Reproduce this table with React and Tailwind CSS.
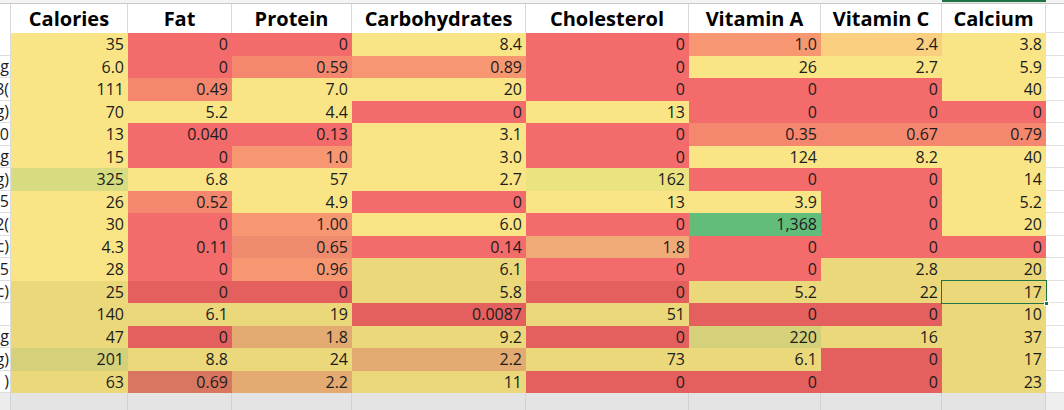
import React from 'react';

const GRID = 'grid grid-cols-[11px_117px_104px_120px_174px_163px_132px_121px_104px_18px]';

const HEADERS = ['Calories', 'Fat', 'Protein', 'Carbohydrates', 'Cholesterol', 'Vitamin A', 'Vitamin C', 'Calcium'];

// colour scale fills, picked off the screenshot
const FILL = {
  Y: 'bg-[#f9e585]',
  y: 'bg-[#ebd87a]',
  R: 'bg-[#f46b6b]',
  r: 'bg-[#e3605f]',
  o: 'bg-[#f4876e]',
  m: 'bg-[#ee8a6e]',
  p: 'bg-[#f79771]',
  n: 'bg-[#fbcf80]',
  a: 'bg-[#efaa77]',
  t: 'bg-[#e3aa72]',
  d: 'bg-[#d8765f]',
  g: 'bg-[#63bd7a]',
  L: 'bg-[#d8dc80]',
  l: 'bg-[#d5d07a]',
  K: 'bg-[#eae380]',
};

const ROWS = [
  { label: '', cells: [['35', 'Y'], ['0', 'R'], ['0', 'R'], ['8.4', 'Y'], ['0', 'R'], ['1.0', 'p'], ['2.4', 'n'], ['3.8', 'Y']] },
  { label: 'g', cells: [['6.0', 'Y'], ['0', 'R'], ['0.59', 'o'], ['0.89', 'p'], ['0', 'R'], ['26', 'Y'], ['2.7', 'Y'], ['5.9', 'Y']] },
  { label: '3(', cells: [['111', 'Y'], ['0.49', 'o'], ['7.0', 'Y'], ['20', 'Y'], ['0', 'R'], ['0', 'R'], ['0', 'R'], ['40', 'Y']] },
  { label: 'g)', cells: [['70', 'Y'], ['5.2', 'Y'], ['4.4', 'Y'], ['0', 'R'], ['13', 'Y'], ['0', 'R'], ['0', 'R'], ['0', 'R']] },
  { label: '0', cells: [['13', 'Y'], ['0.040', 'R'], ['0.13', 'R'], ['3.1', 'Y'], ['0', 'R'], ['0.35', 'o'], ['0.67', 'o'], ['0.79', 'o']] },
  { label: 'g', cells: [['15', 'Y'], ['0', 'R'], ['1.0', 'p'], ['3.0', 'Y'], ['0', 'R'], ['124', 'Y'], ['8.2', 'Y'], ['40', 'Y']] },
  { label: 'g)', cells: [['325', 'L'], ['6.8', 'Y'], ['57', 'Y'], ['2.7', 'Y'], ['162', 'K'], ['0', 'R'], ['0', 'R'], ['14', 'Y']] },
  { label: '5', cells: [['26', 'Y'], ['0.52', 'o'], ['4.9', 'Y'], ['0', 'R'], ['13', 'Y'], ['3.9', 'Y'], ['0', 'R'], ['5.2', 'Y']] },
  { label: '2(', cells: [['30', 'Y'], ['0', 'R'], ['1.00', 'p'], ['6.0', 'Y'], ['0', 'R'], ['1,368', 'g'], ['0', 'R'], ['20', 'Y']] },
  { label: 'c)', cells: [['4.3', 'Y'], ['0.11', 'R'], ['0.65', 'm'], ['0.14', 'R'], ['1.8', 'a'], ['0', 'R'], ['0', 'R'], ['0', 'R']] },
  { label: '5', cells: [['28', 'Y'], ['0', 'R'], ['0.96', 'p'], ['6.1', 'y'], ['0', 'R'], ['0', 'R'], ['2.8', 'y'], ['20', 'y']] },
  { label: 'c)', cells: [['25', 'y'], ['0', 'r'], ['0', 'r'], ['5.8', 'y'], ['0', 'r'], ['5.2', 'y'], ['22', 'y'], ['17', 'y']], selected: 7 },
  { label: '', cells: [['140', 'y'], ['6.1', 'y'], ['19', 'y'], ['0.0087', 'r'], ['51', 'y'], ['0', 'r'], ['0', 'r'], ['10', 'y']] },
  { label: 'g', cells: [['47', 'y'], ['0', 'r'], ['1.8', 't'], ['9.2', 'y'], ['0', 'r'], ['220', 'l'], ['16', 'y'], ['37', 'y']] },
  { label: 'g)', cells: [['201', 'l'], ['8.8', 'y'], ['24', 'y'], ['2.2', 't'], ['73', 'y'], ['6.1', 'y'], ['0', 'r'], ['17', 'y']] },
  { label: ')', cells: [['63', 'y'], ['0.69', 'd'], ['2.2', 't'], ['11', 'y'], ['0', 'r'], ['0', 'r'], ['0', 'r'], ['23', 'y']] },
];

export default function App() {
  return (
    <div className="w-[1064px] h-[410px] overflow-hidden bg-white text-[#1c1c1c] font-['Open_Sans',_'Noto_Sans',sans-serif]">
      {/* Column header strip edge */}
      <div className={`${GRID} h-[4px] bg-[#f3f3f3] border-b border-[#c8c8c8]`}>
        <div />
        <div />
        <div />
        <div />
        <div />
        <div />
        <div />
        <div />
        <div className="bg-[#e9e9e9] border-t-2 border-[#217346]" />
        <div />
      </div>

      {/* Header row */}
      <div className={`${GRID} h-[29px] bg-white`}>
        <div className="border-r border-[#d9d9d9]" />
        {HEADERS.map(h => (
          <div key={h} className="flex items-center justify-center border-r border-[#d9d9d9] text-[20px] font-bold text-black leading-none">
            {h}
          </div>
        ))}
        <div className="border-b border-[#e1e1e1]" />
      </div>

      {/* Data rows */}
      {ROWS.map((row, i) => (
        <div key={i} className={`${GRID} h-[22.5px] relative ${row.selected != null ? 'z-10' : ''}`}>
          <div className="relative overflow-hidden bg-white border-r border-b border-[#dcdcdc]">
            <span className="absolute right-[1px] top-1/2 -translate-y-1/2 text-[16px] leading-none whitespace-nowrap">
              {row.label}
            </span>
          </div>
          {row.cells.map(([v, c], j) => (
            <div key={j} className={`relative flex items-center justify-end pr-[4px] text-[16px] leading-none ${FILL[c]}`}>
              {v}
              {row.selected === j && (
                <>
                  <div className="absolute -inset-[1px] border-[1.5px] border-[#217346]" />
                  <div className="absolute -right-[3px] -bottom-[3px] w-[5px] h-[5px] bg-[#217346] border border-white" />
                </>
              )}
            </div>
          ))}
          <div className="bg-white border-b border-[#e1e1e1]" />
        </div>
      ))}

      {/* Trailing empty row */}
      <div className={`${GRID} h-[20px] bg-[#e4e4e4]`}>
        <div className="border-r border-[#d2d2d2] bg-[#ececec]" />
        {HEADERS.map(h => (
          <div key={h} className="border-r border-[#d2d2d2]" />
        ))}
        <div className="bg-[#eeeeee]" />
      </div>
    </div>
  );
}
